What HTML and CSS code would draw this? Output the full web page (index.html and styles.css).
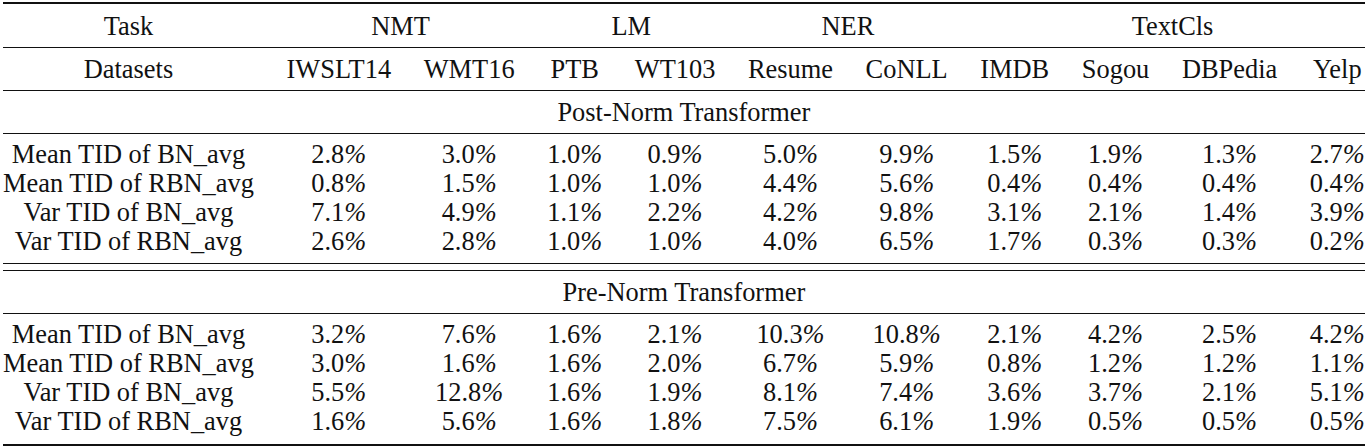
FILE: index.html
```html
<!DOCTYPE html>
<html>
<head>
<meta charset="utf-8">
<link rel="stylesheet" href="styles.css">
</head>
<body>
<div class="page">
<table class="results">
  <tbody>
    <tr class="head head-task">
      <td>Task</td>
      <td colspan="2">NMT</td>
      <td colspan="2">LM</td>
      <td colspan="2">NER</td>
      <td colspan="4">TextCls</td>
    </tr>
    <tr class="head head-ds">
      <td>Datasets</td>
      <td>IWSLT14</td><td>WMT16</td><td>PTB</td><td>WT103</td><td>Resume</td><td>CoNLL</td><td>IMDB</td><td>Sogou</td><td>DBPedia</td><td>Yelp</td>
    </tr>
    <tr class="section">
      <td colspan="11">Post-Norm Transformer</td>
    </tr>
    <tr class="data first">
      <td>Mean TID of BN_avg</td>
      <td>2.8<i>%</i></td><td>3.0<i>%</i></td><td>1.0<i>%</i></td><td>0.9<i>%</i></td><td>5.0<i>%</i></td><td>9.9<i>%</i></td><td>1.5<i>%</i></td><td>1.9<i>%</i></td><td>1.3<i>%</i></td><td>2.7<i>%</i></td>
    </tr>
    <tr class="data">
      <td>Mean TID of RBN_avg</td>
      <td>0.8<i>%</i></td><td>1.5<i>%</i></td><td>1.0<i>%</i></td><td>1.0<i>%</i></td><td>4.4<i>%</i></td><td>5.6<i>%</i></td><td>0.4<i>%</i></td><td>0.4<i>%</i></td><td>0.4<i>%</i></td><td>0.4<i>%</i></td>
    </tr>
    <tr class="data">
      <td>Var TID of BN_avg</td>
      <td>7.1<i>%</i></td><td>4.9<i>%</i></td><td>1.1<i>%</i></td><td>2.2<i>%</i></td><td>4.2<i>%</i></td><td>9.8<i>%</i></td><td>3.1<i>%</i></td><td>2.1<i>%</i></td><td>1.4<i>%</i></td><td>3.9<i>%</i></td>
    </tr>
    <tr class="data last">
      <td>Var TID of RBN_avg</td>
      <td>2.6<i>%</i></td><td>2.8<i>%</i></td><td>1.0<i>%</i></td><td>1.0<i>%</i></td><td>4.0<i>%</i></td><td>6.5<i>%</i></td><td>1.7<i>%</i></td><td>0.3<i>%</i></td><td>0.3<i>%</i></td><td>0.2<i>%</i></td>
    </tr>
    <tr class="gap">
      <td colspan="11"></td>
    </tr>
    <tr class="section">
      <td colspan="11">Pre-Norm Transformer</td>
    </tr>
    <tr class="data first">
      <td>Mean TID of BN_avg</td>
      <td>3.2<i>%</i></td><td>7.6<i>%</i></td><td>1.6<i>%</i></td><td>2.1<i>%</i></td><td>10.3<i>%</i></td><td>10.8<i>%</i></td><td>2.1<i>%</i></td><td>4.2<i>%</i></td><td>2.5<i>%</i></td><td>4.2<i>%</i></td>
    </tr>
    <tr class="data">
      <td>Mean TID of RBN_avg</td>
      <td>3.0<i>%</i></td><td>1.6<i>%</i></td><td>1.6<i>%</i></td><td>2.0<i>%</i></td><td>6.7<i>%</i></td><td>5.9<i>%</i></td><td>0.8<i>%</i></td><td>1.2<i>%</i></td><td>1.2<i>%</i></td><td>1.1<i>%</i></td>
    </tr>
    <tr class="data">
      <td>Var TID of BN_avg</td>
      <td>5.5<i>%</i></td><td>12.8<i>%</i></td><td>1.6<i>%</i></td><td>1.9<i>%</i></td><td>8.1<i>%</i></td><td>7.4<i>%</i></td><td>3.6<i>%</i></td><td>3.7<i>%</i></td><td>2.1<i>%</i></td><td>5.1<i>%</i></td>
    </tr>
    <tr class="data last final">
      <td>Var TID of RBN_avg</td>
      <td>1.6<i>%</i></td><td>5.6<i>%</i></td><td>1.6<i>%</i></td><td>1.8<i>%</i></td><td>7.5<i>%</i></td><td>6.1<i>%</i></td><td>1.9<i>%</i></td><td>0.5<i>%</i></td><td>0.5<i>%</i></td><td>0.5<i>%</i></td>
    </tr>
  </tbody>
</table>
</div>
</body>
</html>
```

FILE: styles.css
```css
html, body {
  margin: 0;
  padding: 0;
  background: #ffffff;
}

.page {
  padding: 2px 0 0 3px;
}

.results {
  border-collapse: collapse;
  font-family: "Liberation Serif", "Times New Roman", serif;
  font-size: 26.4px;
  color: #111111;
}

.results td {
  padding: 0 16.3px;
  text-align: center;
  white-space: nowrap;
  vertical-align: middle;
}

.results td:first-child {
  padding-left: 0;
}

.results td:last-child {
  padding-right: 0;
}

.results i {
  font-style: italic;
}

.head td {
  height: 42px;
  line-height: 42px;
  border-bottom: 1px solid #111111;
}

.head-task td {
  border-top: 2px solid #111111;
  height: 43px;
}

.section td {
  height: 42px;
  line-height: 42px;
  border-bottom: 1px solid #111111;
}

.data td {
  height: 29px;
  line-height: 29px;
}

.data.first td {
  padding-top: 6px;
}

.data.last td {
  padding-bottom: 7px;
  border-bottom: 1px solid #111111;
}

.gap td {
  height: 6px;
  padding: 0;
  border-bottom: 1px solid #111111;
}

.data.final td {
  padding-bottom: 8px;
  border-bottom: 2px solid #111111;
}
```
